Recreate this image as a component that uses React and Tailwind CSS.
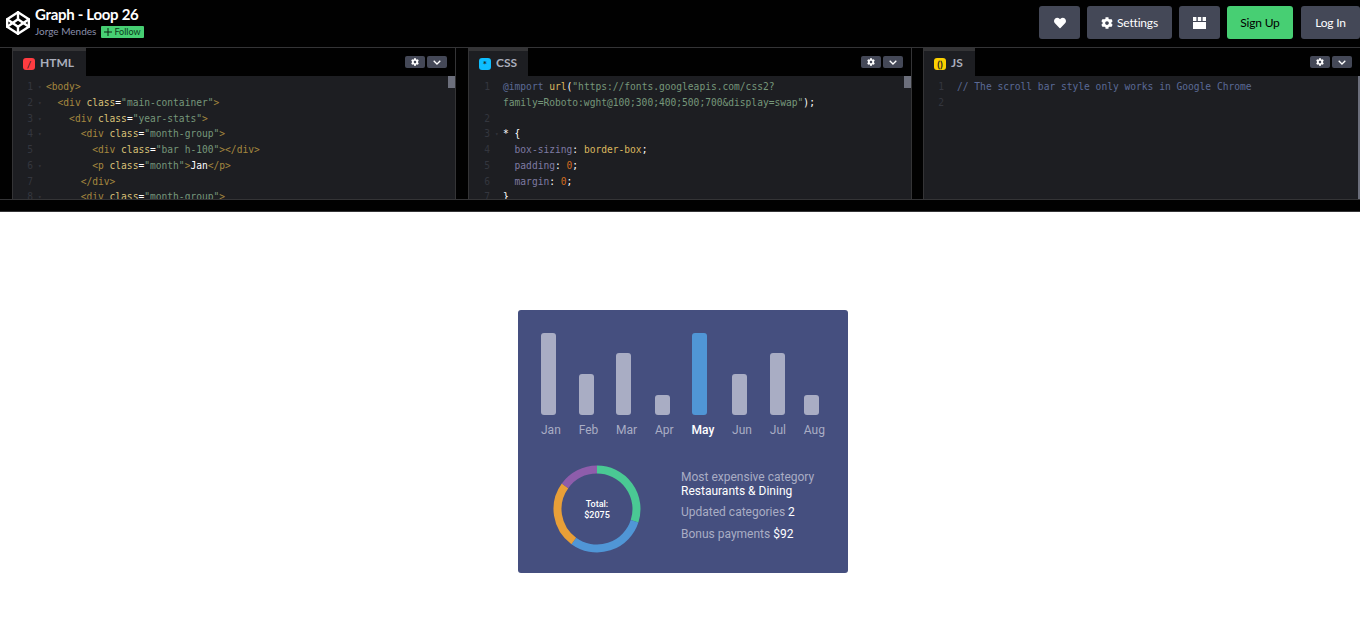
import { FaHeart, FaCog } from 'react-icons/fa'

const lato = { fontFamily: 'Lato, sans-serif' }

const TAG = 'text-[#a5883f]'
const ATTR = 'text-[#d9c177]'
const STR = 'text-[#76977a]'
const WHITE = 'text-white'
const PROP = 'text-[#7f7ba3]'
const VAL = 'text-[#dcb85f]'
const NUM = 'text-[#cf6a1f]'
const BLUE = 'text-[#5b6a96]'

const div = (indent, cls) => [
  [TAG, indent + '<div '],
  [ATTR, 'class'],
  [WHITE, '='],
  [STR, `"${cls}"`],
  [TAG, '>'],
]

const htmlLines = [
  { n: 1, fold: true, t: [[TAG, '<body>']] },
  { n: 2, fold: true, t: div('  ', 'main-container') },
  { n: 3, fold: true, t: div('    ', 'year-stats') },
  { n: 4, fold: true, t: div('      ', 'month-group') },
  { n: 5, t: [...div('        ', 'bar h-100'), [TAG, '</div>']] },
  { n: 6, fold: true, t: [[TAG, '        <p '], [ATTR, 'class'], [WHITE, '='], [STR, '"month"'], [TAG, '>'], [WHITE, 'Jan'], [TAG, '</p>']] },
  { n: 7, t: [[TAG, '      </div>']] },
  { n: 8, fold: true, t: div('      ', 'month-group') },
]

const cssLines = [
  { n: 1, t: [[BLUE, '@import '], [VAL, 'url'], [WHITE, '('], [STR, '"https://fonts.googleapis.com/css2?']] },
  { t: [[STR, 'family=Roboto:wght@100;300;400;500;700&display=swap"'], [WHITE, ');']] },
  { n: 2, t: [] },
  { n: 3, fold: true, t: [[WHITE, '* {']] },
  { n: 4, t: [[PROP, '  box-sizing'], [WHITE, ': '], [VAL, 'border-box'], [WHITE, ';']] },
  { n: 5, t: [[PROP, '  padding'], [WHITE, ': '], [NUM, '0'], [WHITE, ';']] },
  { n: 6, t: [[PROP, '  margin'], [WHITE, ': '], [NUM, '0'], [WHITE, ';']] },
  { n: 7, t: [[WHITE, '}']] },
]

const jsLines = [
  { n: 1, t: [[BLUE, '// The scroll bar style only works in Google Chrome']] },
  { n: 2, t: [] },
]

const months = [
  { name: 'Jan', h: 'h-[82px]' },
  { name: 'Feb', h: 'h-[41px]' },
  { name: 'Mar', h: 'h-[62px]' },
  { name: 'Apr', h: 'h-[20px]' },
  { name: 'May', h: 'h-[82px]', active: true },
  { name: 'Jun', h: 'h-[41px]' },
  { name: 'Jul', h: 'h-[62px]' },
  { name: 'Aug', h: 'h-[20px]' },
]

const segments = [
  { color: '#4ac994', from: 0, to: 108 },
  { color: '#5096d6', from: 108, to: 216 },
  { color: '#e89f38', from: 216, to: 306 },
  { color: '#8e5dab', from: 306, to: 360 },
]

function arc(from, to) {
  const r = 39.5
  const c = 44
  const pt = (a) => {
    const rad = ((a - 90) * Math.PI) / 180
    return `${c + r * Math.cos(rad)} ${c + r * Math.sin(rad)}`
  }
  return `M${pt(from)} A${r} ${r} 0 0 1 ${pt(to)}`
}

function Logo() {
  return (
    <svg viewBox="0 0 24 24" className="w-[26px] h-[26px] shrink-0" fill="none" stroke="white" strokeWidth="2.2" strokeLinejoin="round" strokeLinecap="round">
      <polygon points="12 2 22 8.5 22 15.5 12 22 2 15.5 2 8.5 12 2" />
      <line x1="12" y1="22" x2="12" y2="15.5" />
      <polyline points="22 8.5 12 15.5 2 8.5" />
      <polyline points="2 15.5 12 8.5 22 15.5" />
      <line x1="12" y1="2" x2="12" y2="8.5" />
    </svg>
  )
}

function GridIcon() {
  return (
    <svg viewBox="0 0 13 12" className="w-[13px] h-[12px]" fill="white">
      <rect x="0" y="0" width="3.4" height="4" />
      <rect x="4.8" y="0" width="3.4" height="4" />
      <rect x="9.6" y="0" width="3.4" height="4" />
      <rect x="0" y="5" width="13" height="7" />
    </svg>
  )
}

function HeaderButton({ className, children }) {
  return (
    <div className={`h-[33px] flex items-center justify-center gap-[4px] rounded-[3px] bg-[#444857] text-white text-[12px] tracking-[-0.2px] ${className}`}>
      {children}
    </div>
  )
}

function Header() {
  return (
    <header className="h-[47px] bg-[#010101] flex items-start justify-between" style={lato}>
      <div className="flex items-start pl-[5px] pt-[10px]">
        <Logo />
        <div className="ml-[4px] -mt-[6px]">
          <div className="text-white font-bold text-[15px] leading-[21px] tracking-[-0.3px]">Graph - Loop 26</div>
          <div className="flex items-center">
            <span className="text-[#8b90ab] text-[10px] leading-[13px] w-[66px] whitespace-nowrap">Jorge Mendes</span>
            <span className="w-[43px] h-[12px] rounded-[1px] bg-[#47cf73] text-[#0a3a1b] text-[9px] leading-[12px] flex items-center justify-center gap-[2px]">
              <svg viewBox="0 0 8 8" className="w-[8px] h-[8px]" stroke="#0a2412" strokeWidth="1">
                <path d="M4 0v8M0 4h8" />
              </svg>
              Follow
            </span>
          </div>
        </div>
      </div>
      <div className="flex pt-[6px]">
        <HeaderButton className="w-[41px]">
          <FaHeart className="w-[12px] h-[12px]" />
        </HeaderButton>
        <HeaderButton className="w-[85px] ml-[7px]">
          <FaCog className="w-[12px] h-[12px]" />
          Settings
        </HeaderButton>
        <HeaderButton className="w-[41px] ml-[7px]">
          <GridIcon />
        </HeaderButton>
        <HeaderButton className="w-[66px] ml-[7px] !bg-[#47cf73] !text-black">Sign Up</HeaderButton>
        <HeaderButton className="w-[59px] ml-[8px]">Log In</HeaderButton>
      </div>
    </header>
  )
}

function LangIcon({ bg, color, children }) {
  return (
    <span className={`w-[12px] h-[12px] rounded-[3px] flex items-center justify-center text-[10px] leading-none font-bold ${bg} ${color}`}>
      {children}
    </span>
  )
}

function Panel({ className, icon, name, lines, tabWidth, thumb, gutter }) {
  return (
    <section className={`relative h-full flex flex-col border-r border-[#343436] overflow-hidden ${className}`}>
      <div className="h-[28px] shrink-0 flex items-stretch justify-between bg-[#010101]">
        <div className={`flex items-center gap-[5px] pl-[10px] bg-[#1d1e22] border-t-[3px] border-[#343436] ${tabWidth}`} style={lato}>
          {icon}
          <span className="text-[#aaaebc] text-[12px] font-bold -mt-[1px]">{name}</span>
        </div>
        <div className="flex items-center gap-[2px] pr-[8px]">
          <div className="w-[20px] h-[12px] rounded-[2px] bg-[#444857] flex items-center justify-center">
            <FaCog className="w-[8px] h-[8px] text-white" />
          </div>
          <div className="w-[20px] h-[12px] rounded-[2px] bg-[#444857] flex items-center justify-center">
            <svg viewBox="0 0 8 5" className="w-[8px] h-[5px]" fill="none" stroke="white" strokeWidth="1.3">
              <path d="M.7.7 4 4l3.3-3.3" />
            </svg>
          </div>
        </div>
      </div>
      <div className="flex-1 bg-[#1d1e22] pt-[3px] overflow-hidden text-[9.6px] leading-[15.75px]" style={{ fontFamily: '"DejaVu Sans Mono", monospace' }}>
        {lines.map((line, i) => (
          <div key={i} className="flex h-[15.75px]">
            <span className={`text-[#34363e] text-right shrink-0 ${gutter}`}>{line.n}</span>
            <span className="w-[13px] shrink-0 text-[#34363e] text-[6px] pl-[5px]">{line.fold ? '▾' : ''}</span>
            <span className="whitespace-pre">
              {line.t.map(([color, text], j) => (
                <span key={j} className={color}>{text}</span>
              ))}
            </span>
          </div>
        ))}
      </div>
      {thumb}
    </section>
  )
}

function Editors() {
  const thumb = <div className="absolute right-0 top-[28px] w-[7px] h-[12px] bg-[#6c6f7c]" />
  return (
    <div className="h-[153px] bg-[#010101] flex border-t border-b border-[#343436]">
      <div className="w-[13px] shrink-0 border-r border-[#343436]" />
      <Panel
        className="w-[443px]"
        name="HTML"
        tabWidth="w-[73px]"
        gutter="w-[20px]"
        lines={htmlLines}
        thumb={thumb}
        icon={<LangIcon bg="bg-[#ff3c41]" color="text-[#1d1e22] font-normal">/</LangIcon>}
      />
      <div className="w-[13px] shrink-0 border-r border-[#343436]" />
      <Panel
        className="w-[443px]"
        name="CSS"
        tabWidth="w-[59px]"
        gutter="w-[21px]"
        lines={cssLines}
        thumb={thumb}
        icon={<LangIcon bg="bg-[#0ebeff]" color="text-[#1d1e22]">*</LangIcon>}
      />
      <div className="w-[12px] shrink-0 border-r border-[#343436]" />
      <Panel
        className="flex-1 !border-r-0"
        name="JS"
        tabWidth="w-[51px]"
        gutter="w-[20px]"
        lines={jsLines}
        thumb={<div className="absolute right-0 top-[28px] w-[2px] h-[123px] bg-[#6c6f7c]" />}
        icon={<LangIcon bg="bg-[#fcd000]" color="text-[#1d1e22]">()</LangIcon>}
      />
    </div>
  )
}

function Donut() {
  return (
    <div className="relative w-[88px] h-[88px] shrink-0">
      <svg viewBox="0 0 88 88" className="w-[88px] h-[88px]" fill="none" strokeWidth="8">
        {segments.map((s) => (
          <path key={s.color} d={arc(s.from, s.to)} stroke={s.color} />
        ))}
      </svg>
      <div className="absolute inset-0 pt-[2px] flex flex-col items-center justify-center text-white text-[9px] leading-[11px] font-medium">
        <span>Total:</span>
        <span>$2075</span>
      </div>
    </div>
  )
}

function GraphCard() {
  return (
    <div className="w-[330px] h-[263px] ml-[518px] rounded-[3px] bg-[#454f7f] px-[23px] pt-[23px]" style={{ fontFamily: 'Roboto, sans-serif' }}>
      <div className="flex justify-between">
        {months.map((m) => (
          <div key={m.name} className="flex flex-col">
            <div className="h-[82px] flex items-end">
              <div className={`w-[15px] rounded-[3px] ${m.h} ${m.active ? 'bg-[#5096d6]' : 'bg-[#a9adc4]'}`} />
            </div>
            <p className={`mt-[7px] text-[12px] leading-[16px] ${m.active ? 'text-white font-medium' : 'text-[#a9adc4]'}`}>{m.name}</p>
          </div>
        ))}
      </div>
      <div className="flex items-center mt-[27px] ml-[12px]">
        <Donut />
        <div className="ml-[40px] mb-[8px] text-[12px] text-[#a9adc4]">
          <p className="leading-[14px]">Most expensive category</p>
          <p className="leading-[14px] text-white">Restaurants &amp; Dining</p>
          <p className="leading-[14px] mt-[7px]">Updated categories <span className="text-white">2</span></p>
          <p className="leading-[14px] mt-[8px]">Bonus payments <span className="text-white">$92</span></p>
        </div>
      </div>
    </div>
  )
}

export default function App() {
  return (
    <div className="min-h-[617px] bg-white overflow-hidden">
      <Header />
      <Editors />
      <div className="h-[12px] bg-[#010101] border-b border-[#343436]" />
      <main className="pt-[98px]">
        <GraphCard />
      </main>
    </div>
  )
}
